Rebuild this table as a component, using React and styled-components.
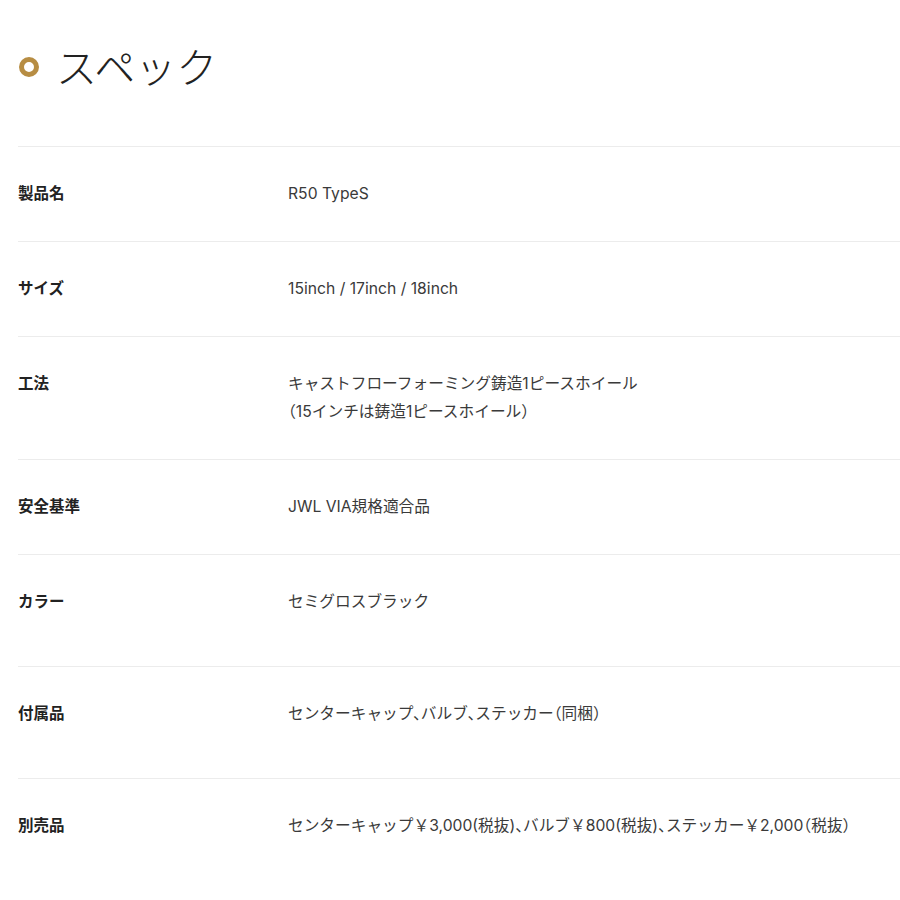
import React from "react"
import styled, { createGlobalStyle } from "styled-components"

const specs = [
    { label: "製品名", value: ["R50 TypeS"] },
    { label: "サイズ", value: ["15inch / 17inch / 18inch"] },
    { label: "工法", value: ["キャストフローフォーミング鋳造1ピースホイール", "（15インチは鋳造1ピースホイール）"] },
    { label: "安全基準", value: ["JWL VIA規格適合品"] },
    { label: "カラー", value: ["セミグロスブラック"], tall: true },
    { label: "付属品", value: ["センターキャップ、バルブ、ステッカー（同梱）"], tall: true },
    { label: "別売品", value: ["センターキャップ￥3,000(税抜)、バルブ￥800(税抜)、ステッカー￥2,000（税抜）"] },
]

function App(){
    return (
        <Page>
            <GlobalStyle />
            <Heading>
                <Dot />
                <Title>スペック</Title>
            </Heading>
            <SpecList>
                {specs.map(item => (
                    <Row key={item.label} $tall={item.tall}>
                        <Label>{item.label}</Label>
                        <Value>
                            {item.value.map(line => <div key={line}>{line}</div>)}
                        </Value>
                    </Row>
                ))}
            </SpecList>
        </Page>
    )
}

export default App

const GlobalStyle = createGlobalStyle`
   body {
      margin: 0;
      background: #fff;
      font-family: Inter, "Noto Sans CJK JP", sans-serif;
   }
`

const Page = styled.div`
   padding: 33px 0 0 18px;
   width: 882px;
`

const Heading = styled.div`
   display: flex;
   align-items: center;
   gap: 17px;
   height: 64px;
   margin-bottom: 49px;
`

const Dot = styled.span`
   width: 10px;
   height: 10px;
   border-radius: 50%;
   border: 5px solid #b78d43;
   margin-left: 1px;
   margin-top: 4px;
`

const Title = styled.h1`
   margin: 0;
   font-family: "Noto Sans CJK JP", sans-serif;
   font-size: 41px;
   font-weight: 300;
   line-height: 64px;
   color: #222;
`

const SpecList = styled.div`
   display: flex;
   flex-direction: column;
`

const Row = styled.div`
   display: grid;
   grid-template-columns: 270px 1fr;
   border-top: 1px solid #ececec;
   padding: 33px 0 ${props => props.$tall ? "50px" : "33px"};
   line-height: 28px;
`

const Label = styled.div`
   font-size: 15.5px;
   font-weight: 600;
   color: #222;
`

const Value = styled.div`
   font-size: 15.7px;
   font-weight: 400;
   color: #3a3a3a;
   font-feature-settings: "halt";
`
